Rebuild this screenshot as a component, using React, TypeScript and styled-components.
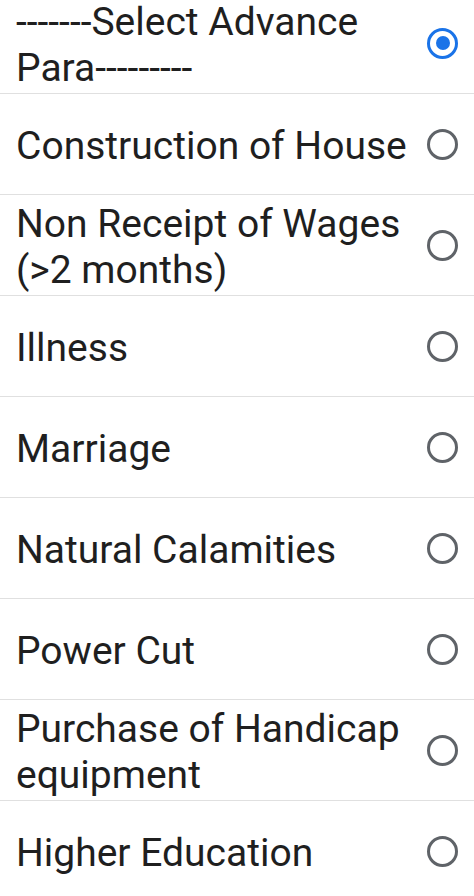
import React, { useState } from "react";
import styled, { createGlobalStyle } from "styled-components";

const options = [
  "-------Select Advance Para---------",
  "Construction of House",
  "Non Receipt of Wages (>2 months)",
  "Illness",
  "Marriage",
  "Natural Calamities",
  "Power Cut",
  "Purchase of Handicap equipment",
  "Higher Education",
];

const App = () => {
  const [selected, setSelected] = useState(0);
  return (
    <>
      <GlobalStyle />
      <List>
        {options.map((label, i) => (
          <Row key={label} onClick={() => setSelected(i)}>
            <Label>{label}</Label>
            <Radio checked={i === selected} />
          </Row>
        ))}
      </List>
    </>
  );
};

const GlobalStyle = createGlobalStyle`
  html, body {
    margin: 0;
    padding: 0;
    background: #ffffff;
    overflow: hidden;
  }
  body {
    font-family: Roboto, "Noto Sans", sans-serif;
  }
`;

const List = styled.ul`
  list-style: none;
  margin: -7px 0 0;
  padding: 0;
`;

const Row = styled.li`
  display: flex;
  align-items: center;
  justify-content: space-between;
  gap: 14px;
  min-height: 100px;
  padding: 0 16px;
  border-bottom: 1px solid #e0e0e0;
  cursor: pointer;
`;

const Label = styled.span`
  flex: 1;
  font-size: 39px;
  line-height: 46px;
  padding-top: 3px;
  color: #1f1f1f;
`;

const Radio = styled.span<{ checked?: boolean }>`
  flex: none;
  position: relative;
  width: 31px;
  height: 31px;
  box-sizing: border-box;
  border-radius: 50%;
  border: 3px solid ${(props) => (props.checked ? "#1a73e8" : "#5f6368")};
  &::after {
    content: "";
    display: ${(props) => (props.checked ? "block" : "none")};
    position: absolute;
    left: 50%;
    top: 50%;
    width: 14px;
    height: 14px;
    margin: -7px 0 0 -7px;
    border-radius: 50%;
    background: #1a73e8;
  }
`;

export default App;
